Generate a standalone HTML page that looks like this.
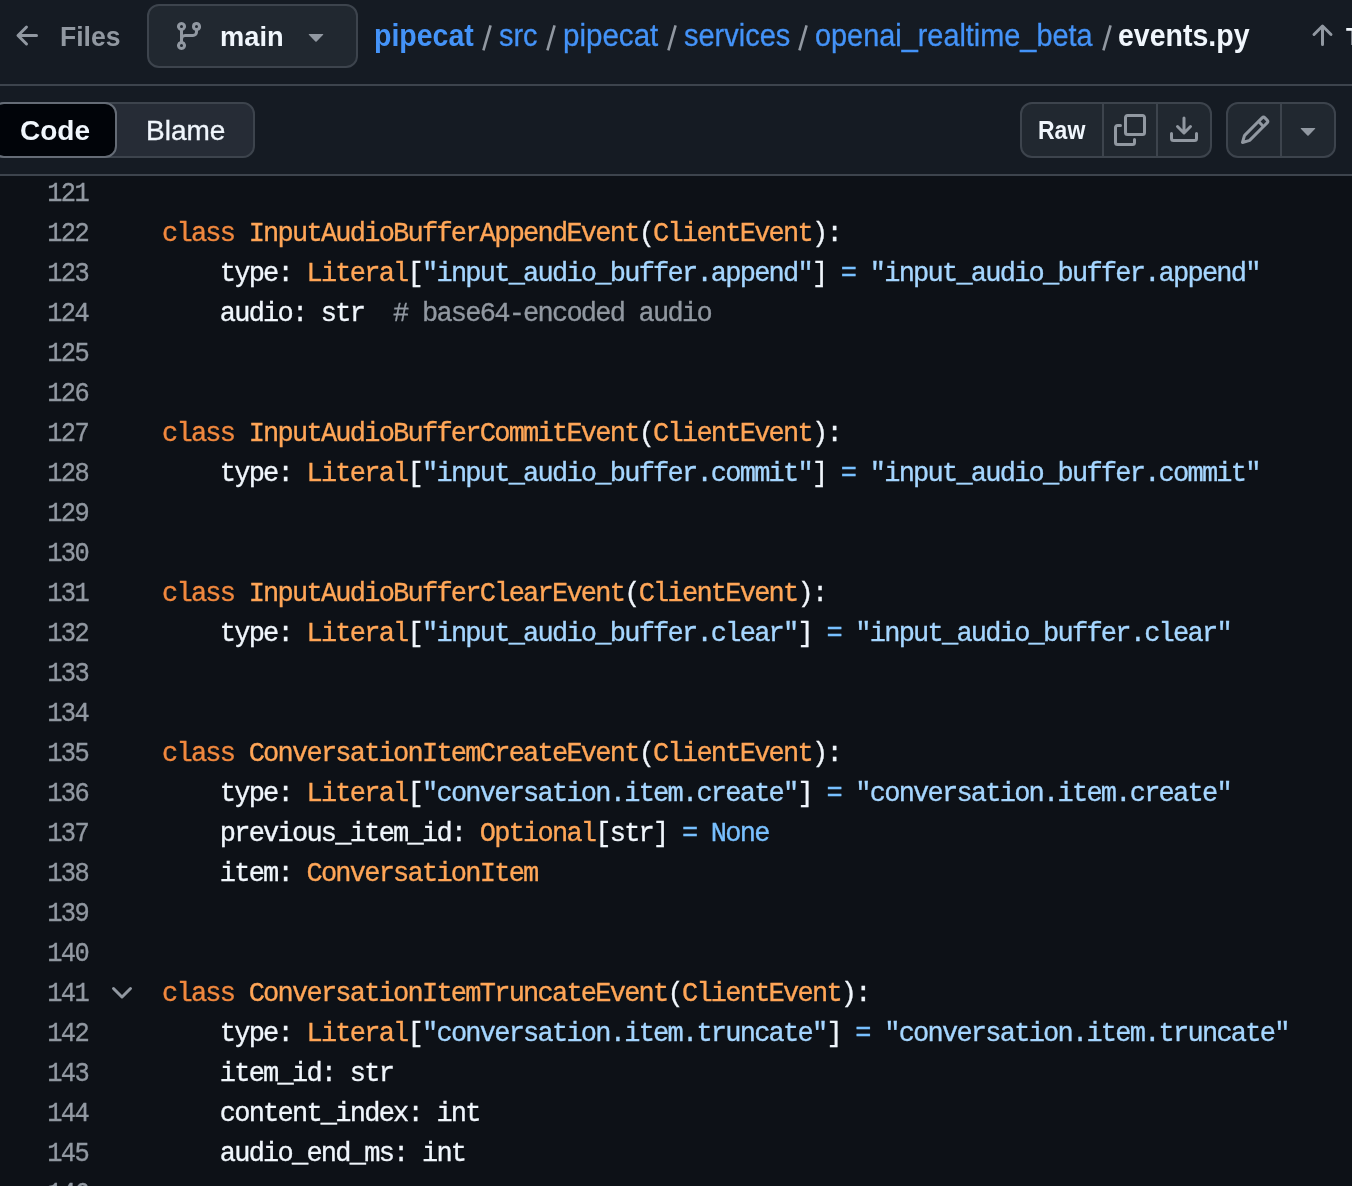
<!DOCTYPE html>
<html><head><meta charset="utf-8">
<style>
*{margin:0;padding:0;box-sizing:border-box}
html,body{width:1352px;height:1186px;overflow:hidden;background:#0d1117}
body{position:relative;font-family:"Liberation Sans",sans-serif;color:#f0f6fc}
.wrap{position:absolute;left:0;top:0;width:1352px;height:1186px;will-change:transform}
.hdr{position:absolute;left:0;top:0;width:1352px;height:176px;background:#151b23}
.line1{position:absolute;left:0;top:84px;width:1352px;height:2px;background:#3d444d}
.line2{position:absolute;left:0;top:174px;width:1352px;height:2px;background:#3d444d}
.abs{position:absolute;white-space:nowrap}
svg.i{position:absolute;fill:#9198a1}
.btn{position:absolute;background:#212830;border:2px solid #3d444d;border-radius:12px}
.t{position:absolute;white-space:nowrap;line-height:1}
.blue{color:#4493f8}
.bc{top:20px;font-size:31px;-webkit-text-stroke:0.3px currentColor}
.gray{color:#9198a1}
.code{position:absolute;left:0;top:176px;width:1352px;height:1010px;background:#0d1117}
.ln{position:absolute;right:0;width:90px;text-align:right;color:#9198a1}
.row{position:absolute;left:0;height:40px;line-height:40px;font-family:"Liberation Mono",monospace;font-size:27px;letter-spacing:-1.76px;white-space:pre;-webkit-text-stroke:0.35px currentColor}
.num{position:absolute;left:0;width:88px;text-align:right;color:#9198a1;transform:scaleX(0.94);transform-origin:100% 50%}
.src{position:absolute;left:162px;color:#f0f6fc}
.k{color:#f0883e}.v{color:#ffa657}.s{color:#a5d6ff}.c1{color:#79c0ff}.cm{color:#9198a1}
</style></head><body>
<div class="wrap">
<div class="hdr"></div>
<div class="line1"></div>
<div class="line2"></div>

<!-- back arrow -->
<svg class="i" style="left:12px;top:20px" width="32" height="32" viewBox="0 0 16 16"><path d="M7.78 12.53a.75.75 0 0 1-1.06 0L2.47 8.28a.75.75 0 0 1 0-1.06l4.25-4.25a.751.751 0 0 1 1.042.018.751.751 0 0 1 .018 1.042L4.81 7h7.44a.75.75 0 0 1 0 1.5H4.81l2.97 2.97a.75.75 0 0 1 0 1.06Z"/></svg>
<div id="files" class="t gray" style="left:60px;top:23px;font-size:28px;font-weight:bold;transform:scaleX(0.948);transform-origin:0 0">Files</div>

<!-- branch button -->
<div class="btn" style="left:147px;top:4px;width:211px;height:64px"></div>
<svg class="i" style="left:173px;top:20px" width="32" height="32" viewBox="0 0 16 16"><path d="M9.5 3.25a2.25 2.25 0 1 1 3 2.122V6A2.5 2.5 0 0 1 10 8.5H6a1 1 0 0 0-1 1v1.128a2.251 2.251 0 1 1-1.5 0V5.372a2.25 2.25 0 1 1 1.5 0v1.836A2.493 2.493 0 0 1 6 7h4a1 1 0 0 0 1-1v-.628A2.25 2.25 0 0 1 9.5 3.25Zm-6 0a.75.75 0 1 0 1.5 0 .75.75 0 0 0-1.5 0Zm8.25-.75a.75.75 0 1 0 0 1.5.75.75 0 0 0 0-1.5ZM4.25 12a.75.75 0 1 0 0 1.5.75.75 0 0 0 0-1.5Z"/></svg>
<div id="main" class="t" style="left:220px;top:23px;font-size:28px;font-weight:bold;transform:scaleX(0.973);transform-origin:0 0">main</div>
<svg class="i" style="left:300px;top:20px" width="32" height="32" viewBox="0 0 16 16"><path d="m4.427 7.427 3.396 3.396a.25.25 0 0 0 .354 0l3.396-3.396A.25.25 0 0 0 11.396 7H4.604a.25.25 0 0 0-.177.427Z"/></svg>

<!-- breadcrumb -->
<div id="b1" class="t blue bc" style="left:374px;font-weight:bold;-webkit-text-stroke:0;transform:scaleX(0.919);transform-origin:0 0">pipecat</div>
<svg id="s1" class="abs" style="left:480.0px;top:22px" width="14" height="32" viewBox="0 0 14 32"><line x1="10.6" y1="3.3" x2="3.4" y2="28.3" stroke="#9198a1" stroke-width="2.6"/></svg>
<div id="b2" class="t blue bc" style="left:499px;transform:scaleX(0.934);transform-origin:0 0">src</div>
<svg id="s2" class="abs" style="left:544.3px;top:22px" width="14" height="32" viewBox="0 0 14 32"><line x1="10.6" y1="3.3" x2="3.4" y2="28.3" stroke="#9198a1" stroke-width="2.6"/></svg>
<div id="b3" class="t blue bc" style="left:563px;transform:scaleX(0.953);transform-origin:0 0">pipecat</div>
<svg id="s3" class="abs" style="left:664.7px;top:22px" width="14" height="32" viewBox="0 0 14 32"><line x1="10.6" y1="3.3" x2="3.4" y2="28.3" stroke="#9198a1" stroke-width="2.6"/></svg>
<div id="b4" class="t blue bc" style="left:684px;transform:scaleX(0.935);transform-origin:0 0">services</div>
<svg id="s4" class="abs" style="left:796.0px;top:22px" width="14" height="32" viewBox="0 0 14 32"><line x1="10.6" y1="3.3" x2="3.4" y2="28.3" stroke="#9198a1" stroke-width="2.6"/></svg>
<div id="b5" class="t blue bc" style="left:815px;transform:scaleX(0.931);transform-origin:0 0">openai_realtime_beta</div>
<svg id="s5" class="abs" style="left:1099.5px;top:22px" width="14" height="32" viewBox="0 0 14 32"><line x1="10.6" y1="3.3" x2="3.4" y2="28.3" stroke="#9198a1" stroke-width="2.6"/></svg>
<div id="b6" class="t bc" style="left:1118px;font-weight:bold;-webkit-text-stroke:0;transform:scaleX(0.92);transform-origin:0 0">events.py</div>

<!-- top arrow -->
<svg class="i" style="left:1306px;top:20px" width="32" height="32" viewBox="0 0 16 16"><path d="M3.47 7.78a.75.75 0 0 1 0-1.06l4.25-4.25a.75.75 0 0 1 1.06 0l4.25 4.25a.751.751 0 0 1-.018 1.042.751.751 0 0 1-1.042.018L9 4.81v7.44a.75.75 0 0 1-1.5 0V4.81L4.53 7.78a.75.75 0 0 1-1.06 0Z"/></svg>
<div class="t" style="left:1346px;top:25px;font-size:24px;font-weight:bold">Top</div>

<!-- segmented control -->
<div class="btn" style="left:-8px;top:102px;width:263px;height:56px;background:#262c36"></div>
<div class="abs" style="left:-8px;top:102px;width:125px;height:56px;background:#010409;border:2px solid #656c76;border-radius:12px"></div>
<div id="code" class="t" style="left:20px;top:117px;font-size:28px;font-weight:bold">Code</div>
<div id="blame" class="t" style="left:146px;top:117px;font-size:28px;-webkit-text-stroke:0.35px currentColor">Blame</div>

<!-- raw group -->
<div class="btn" style="left:1020px;top:102px;width:192px;height:56px"></div>
<div class="abs" style="left:1102px;top:104px;width:2px;height:52px;background:#3d444d"></div>
<div class="abs" style="left:1156px;top:104px;width:2px;height:52px;background:#3d444d"></div>
<div id="raw" class="t" style="left:1038px;top:118px;font-size:25px;font-weight:bold;letter-spacing:0px;transform:scaleX(0.92);transform-origin:0 0">Raw</div>
<svg class="i" style="left:1114px;top:114px" width="32" height="32" viewBox="0 0 16 16"><path d="M0 6.75C0 5.784.784 5 1.75 5h1.5a.75.75 0 0 1 0 1.5h-1.5a.25.25 0 0 0-.25.25v7.5c0 .138.112.25.25.25h7.5a.25.25 0 0 0 .25-.25v-1.5a.75.75 0 0 1 1.5 0v1.5A1.75 1.75 0 0 1 9.25 16h-7.5A1.75 1.75 0 0 1 0 14.25Z"/><path d="M5 1.75C5 .784 5.784 0 6.75 0h7.5C15.216 0 16 .784 16 1.75v7.5A1.75 1.75 0 0 1 14.25 11h-7.5A1.75 1.75 0 0 1 5 9.25Zm1.75-.25a.25.25 0 0 0-.25.25v7.5c0 .138.112.25.25.25h7.5a.25.25 0 0 0 .25-.25v-7.5a.25.25 0 0 0-.25-.25Z"/></svg>
<svg class="i" style="left:1168px;top:114px" width="32" height="32" viewBox="0 0 16 16"><path d="M2.75 14A1.75 1.75 0 0 1 1 12.25v-2.5a.75.75 0 0 1 1.5 0v2.5c0 .138.112.25.25.25h10.5a.25.25 0 0 0 .25-.25v-2.5a.75.75 0 0 1 1.5 0v2.5A1.75 1.75 0 0 1 13.25 14Z"/><path d="M7.25 7.689V2a.75.75 0 0 1 1.5 0v5.689l1.97-1.969a.749.749 0 1 1 1.06 1.06l-3.25 3.25a.749.749 0 0 1-1.06 0L4.22 6.78a.749.749 0 1 1 1.06-1.06l1.97 1.969Z"/></svg>

<!-- edit group -->
<div class="btn" style="left:1226px;top:102px;width:110px;height:56px"></div>
<div class="abs" style="left:1280px;top:104px;width:2px;height:52px;background:#3d444d"></div>
<svg class="i" style="left:1239px;top:114px" width="32" height="32" viewBox="0 0 16 16"><path d="M11.013 1.427a1.75 1.75 0 0 1 2.474 0l1.086 1.086a1.75 1.75 0 0 1 0 2.474l-8.61 8.61c-.21.21-.47.364-.756.445l-3.251.93a.75.75 0 0 1-.927-.928l.929-3.25c.081-.286.235-.547.445-.758l8.61-8.61Zm.176 4.823L9.75 4.81l-6.286 6.287a.253.253 0 0 0-.064.108l-.558 1.953 1.953-.558a.253.253 0 0 0 .108-.064Zm1.238-3.763a.25.25 0 0 0-.354 0L10.811 3.75l1.439 1.44 1.263-1.263a.25.25 0 0 0 0-.354Z"/></svg>
<svg class="i" style="left:1292px;top:114px" width="32" height="32" viewBox="0 0 16 16"><path d="m4.427 7.427 3.396 3.396a.25.25 0 0 0 .354 0l3.396-3.396A.25.25 0 0 0 11.396 7H4.604a.25.25 0 0 0-.177.427Z"/></svg>

<!-- CODE -->
<div class="code">
<div class="row" style="top:-2px"><span class="num">121</span><span class="src"></span></div>
<div class="row" style="top:38px"><span class="num">122</span><span class="src"><span class="k">class</span> <span class="v">InputAudioBufferAppendEvent</span>(<span class="v">ClientEvent</span>):</span></div>
<div class="row" style="top:78px"><span class="num">123</span><span class="src">    type: <span class="v">Literal</span>[<span class="s">"input_audio_buffer.append"</span>] <span class="c1">=</span> <span class="s">"input_audio_buffer.append"</span></span></div>
<div class="row" style="top:118px"><span class="num">124</span><span class="src">    audio: str  <span class="cm"># base64-encoded audio</span></span></div>
<div class="row" style="top:158px"><span class="num">125</span><span class="src"></span></div>
<div class="row" style="top:198px"><span class="num">126</span><span class="src"></span></div>
<div class="row" style="top:238px"><span class="num">127</span><span class="src"><span class="k">class</span> <span class="v">InputAudioBufferCommitEvent</span>(<span class="v">ClientEvent</span>):</span></div>
<div class="row" style="top:278px"><span class="num">128</span><span class="src">    type: <span class="v">Literal</span>[<span class="s">"input_audio_buffer.commit"</span>] <span class="c1">=</span> <span class="s">"input_audio_buffer.commit"</span></span></div>
<div class="row" style="top:318px"><span class="num">129</span><span class="src"></span></div>
<div class="row" style="top:358px"><span class="num">130</span><span class="src"></span></div>
<div class="row" style="top:398px"><span class="num">131</span><span class="src"><span class="k">class</span> <span class="v">InputAudioBufferClearEvent</span>(<span class="v">ClientEvent</span>):</span></div>
<div class="row" style="top:438px"><span class="num">132</span><span class="src">    type: <span class="v">Literal</span>[<span class="s">"input_audio_buffer.clear"</span>] <span class="c1">=</span> <span class="s">"input_audio_buffer.clear"</span></span></div>
<div class="row" style="top:478px"><span class="num">133</span><span class="src"></span></div>
<div class="row" style="top:518px"><span class="num">134</span><span class="src"></span></div>
<div class="row" style="top:558px"><span class="num">135</span><span class="src"><span class="k">class</span> <span class="v">ConversationItemCreateEvent</span>(<span class="v">ClientEvent</span>):</span></div>
<div class="row" style="top:598px"><span class="num">136</span><span class="src">    type: <span class="v">Literal</span>[<span class="s">"conversation.item.create"</span>] <span class="c1">=</span> <span class="s">"conversation.item.create"</span></span></div>
<div class="row" style="top:638px"><span class="num">137</span><span class="src">    previous_item_id: <span class="v">Optional</span>[str] <span class="c1">=</span> <span class="c1">None</span></span></div>
<div class="row" style="top:678px"><span class="num">138</span><span class="src">    item: <span class="v">ConversationItem</span></span></div>
<div class="row" style="top:718px"><span class="num">139</span><span class="src"></span></div>
<div class="row" style="top:758px"><span class="num">140</span><span class="src"></span></div>
<div class="row" style="top:798px"><span class="num">141</span><span class="src"><span class="k">class</span> <span class="v">ConversationItemTruncateEvent</span>(<span class="v">ClientEvent</span>):</span></div>
<div class="row" style="top:838px"><span class="num">142</span><span class="src">    type: <span class="v">Literal</span>[<span class="s">"conversation.item.truncate"</span>] <span class="c1">=</span> <span class="s">"conversation.item.truncate"</span></span></div>
<div class="row" style="top:878px"><span class="num">143</span><span class="src">    item_id: str</span></div>
<div class="row" style="top:918px"><span class="num">144</span><span class="src">    content_index: int</span></div>
<div class="row" style="top:958px"><span class="num">145</span><span class="src">    audio_end_ms: int</span></div>
<div class="row" style="top:998px"><span class="num">146</span><span class="src"></span></div>
<svg class="i" style="left:106px;top:801px" width="32" height="32" viewBox="0 0 16 16"><path d="M12.78 5.22a.749.749 0 0 1 0 1.06l-4.25 4.25a.749.749 0 0 1-1.06 0L3.22 6.28a.749.749 0 0 1 0-1.06.749.749 0 0 1 1.06 0L8 8.939l3.72-3.719a.749.749 0 0 1 1.06 0Z"/></svg>
</div>
</div>
</body></html>
